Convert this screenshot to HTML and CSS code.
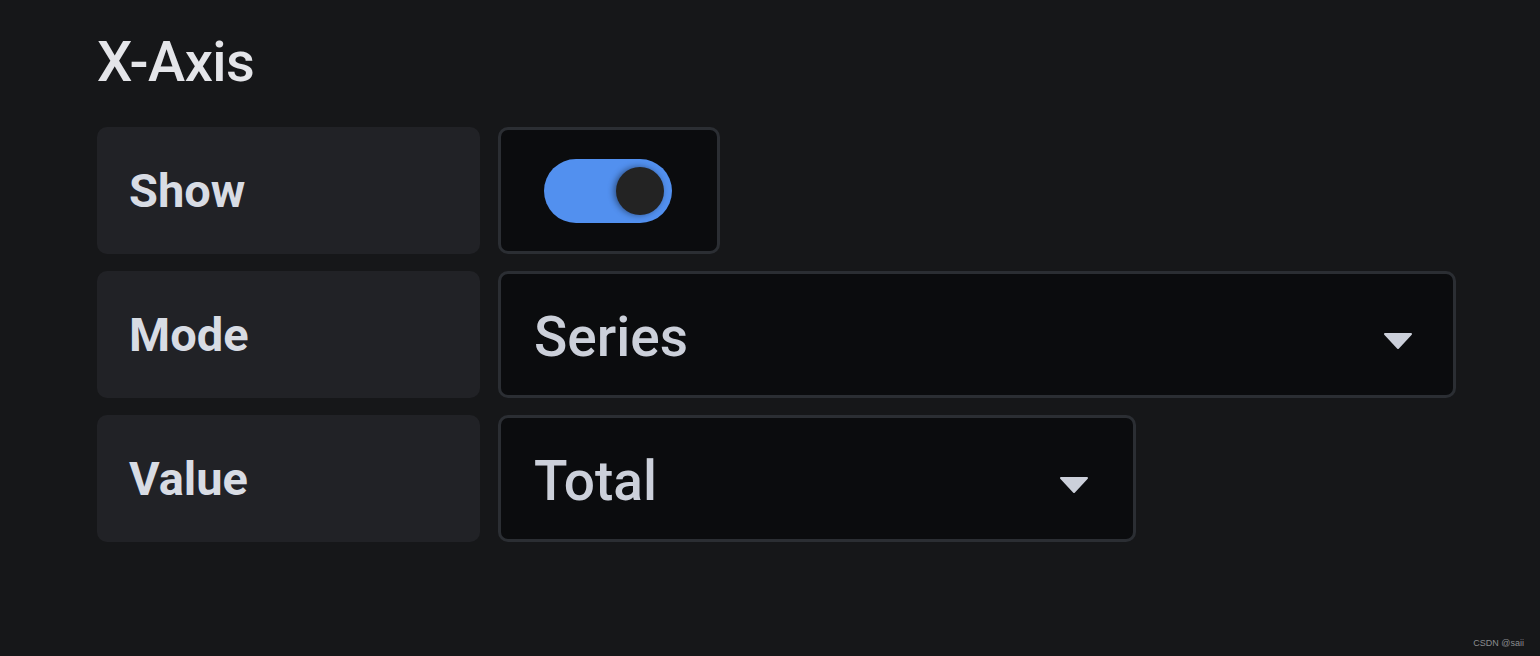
FILE: index.html
```html
<!DOCTYPE html>
<html>
<head>
<meta charset="utf-8">
<link rel="stylesheet" href="styles.css">
</head>
<body>
<div class="panel">
  <h2 class="title">X-Axis</h2>
  <div class="rows">
    <div class="row">
      <div class="label">Show</div>
      <div class="field switch-field">
        <div class="switch"><div class="knob"></div></div>
      </div>
    </div>
    <div class="row">
      <div class="label">Mode</div>
      <div class="field select select-wide">
        <span class="value">Series</span>
        <svg class="caret" viewBox="0 0 30 18" width="30" height="18"><path d="M2 2 H28 L15 16 Z" fill="#ccd0da" stroke="#ccd0da" stroke-width="2" stroke-linejoin="round"/></svg>
      </div>
    </div>
    <div class="row">
      <div class="label">Value</div>
      <div class="field select select-mid">
        <span class="value">Total</span>
        <svg class="caret" viewBox="0 0 30 18" width="30" height="18"><path d="M2 2 H28 L15 16 Z" fill="#ccd0da" stroke="#ccd0da" stroke-width="2" stroke-linejoin="round"/></svg>
      </div>
    </div>
  </div>
</div>
<div class="watermark">CSDN @saii</div>
</body>
</html>
```
FILE: styles.css
```css
html, body {
  margin: 0;
  padding: 0;
  background: #161719;
  height: 100%;
  overflow: hidden;
  font-family: Roboto, "Liberation Sans", sans-serif;
}
.panel {
  padding: 27px 0 0 97px;
}
.title {
  margin: 0 0 30px 0;
  font-size: 56px;
  font-weight: 500;
  line-height: 70px;
  color: #e4e5e9;
  letter-spacing: -0.5px;
}
.rows {
  display: flex;
  flex-direction: column;
  gap: 17px;
}
.row {
  display: flex;
  gap: 18px;
  height: 127px;
}
.label {
  width: 383px;
  box-sizing: border-box;
  background: #212226;
  border-radius: 10px;
  padding-left: 32px;
  display: flex;
  align-items: center;
  font-size: 47px;
  font-weight: 700;
  color: #d8dce4;
}
.field {
  box-sizing: border-box;
  background: #0b0c0e;
  border: 3px solid #2b2e33;
  border-radius: 10px;
  display: flex;
  align-items: center;
}
.switch-field {
  width: 222px;
  padding-left: 43px;
}
.switch {
  width: 128px;
  height: 64px;
  border-radius: 32px;
  background: #5290ef;
  display: flex;
  align-items: center;
  justify-content: flex-end;
  padding-right: 8px;
  box-sizing: border-box;
}
.knob {
  width: 48px;
  height: 48px;
  border-radius: 50%;
  background: #232323;
  box-shadow: -2px 0 6px rgba(0,0,0,0.45);
}
.select {
  justify-content: space-between;
  padding: 0 40px 0 33px;
}
.select-wide { width: 958px; }
.select-mid { width: 638px; padding-right: 44px; }
.value {
  font-size: 55px;
  font-weight: 500;
  color: #ccd0da;
  padding-top: 4px;
}
.caret {
  display: block;
  margin-top: 12px;
}
.watermark {
  position: absolute;
  right: 16px;
  bottom: 8px;
  font-family: "Liberation Sans", Arial, sans-serif;
  font-size: 9px;
  color: #8a8c90;
}
```
